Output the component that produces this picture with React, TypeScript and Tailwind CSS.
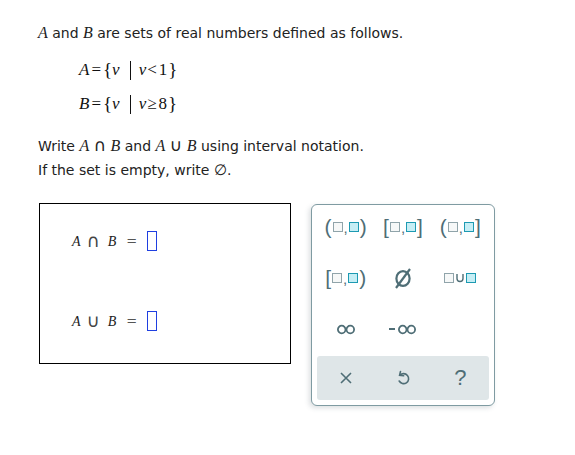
import React from "react";

const sans = "font-['DejaVu_Sans',Verdana,sans-serif]";
const serif = "font-['Liberation_Serif','Times_New_Roman',serif]";

// small square placeholders used in the palette
function Sq({ teal = false }: { teal?: boolean }) {
  return (
    <span
      className={`inline-block h-[10px] w-[10px] border-[1.5px] ${
        teal ? "border-[#1d9ab2] bg-[#c6eef5]" : "border-[#90a4aa] bg-[#f6f8f8]"
      }`}
    />
  );
}

function Interval({ left, right }: { left: string; right: string }) {
  return (
    <span className="flex items-center text-[#4f6e76]">
      <span className="-mt-[2px] font-['Liberation_Sans',sans-serif] text-[21px] leading-none">{left}</span>
      <span className="ml-[1px] flex">
        <Sq />
      </span>
      <span className="mx-[1px] font-['Liberation_Sans',sans-serif] text-[15px] leading-none">,</span>
      <Sq teal />
      <span className="-mt-[2px] ml-[1px] font-['Liberation_Sans',sans-serif] text-[21px] leading-none">{right}</span>
    </span>
  );
}

function Infinity({ className = "" }: { className?: string }) {
  return (
    <svg viewBox="0 0 18 11" className={className} fill="none" stroke="#4f6e76" strokeWidth="1.8">
      <circle cx="4.7" cy="5.5" r="3.8" />
      <circle cx="13.3" cy="5.5" r="3.8" />
    </svg>
  );
}

function Label({ op }: { op: string }) {
  return (
    <div className="flex h-[20px] items-center text-[13px]">
      <span className={`${serif} text-[14px] italic text-[#222]`}>A</span>
      <span className={`${sans} ml-[6px] text-[18px] leading-none text-[#444]`}>{op}</span>
      <span className={`${serif} ml-[8px] text-[14px] italic text-[#222]`}>B</span>
      <span className={`${sans} ml-[10px] text-[#555]`}>=</span>
      <span className="ml-[10px] inline-block h-[20px] w-[10px] border-[1.5px] border-[#1f3fe0]" />
    </div>
  );
}

function SetDef({ name, rel, num }: { name: string; rel: string; num: string }) {
  return (
    <div className="flex items-center">
      <span className="italic">{name}</span>
      <span className="ml-[2px]">=</span>
      <span className="ml-[2px] text-[19px]">{"{"}</span>
      <span className="italic">v</span>
      <span className="ml-[10px] inline-block h-[19px] w-[1px] bg-[#111]" />
      <span className="ml-[8px] italic">v</span>
      <span className="ml-[1px]">{rel}</span>
      <span className="ml-[2px]">{num}</span>
      <span className="ml-[1px] text-[19px]">{"}"}</span>
    </div>
  );
}

export default function App() {
  return (
    <div className={`min-h-[455px] w-[575px] bg-white pl-[38px] pt-[23px] text-[14px] text-[#222] ${sans}`}>
      <p className="leading-[20px]">
        <span className={`${serif} text-[16px] italic`}>A</span> and{" "}
        <span className={`${serif} text-[16px] italic`}>B</span> are sets of real numbers defined as follows.
      </p>

      <div className={`${serif} ml-[41px] mt-[17px] flex flex-col gap-[14px] text-[17px] leading-[20px] text-[#111]`}>
        <SetDef name="A" rel="<" num="1" />
        <SetDef name="B" rel="≥" num="8" />
      </div>

      <p className="mt-[20px] leading-[24px]">
        Write <span className={`${serif} text-[16px] italic`}>A</span>{" "}
        <span className="text-[17px] leading-none">∩</span>{" "}
        <span className={`${serif} text-[16px] italic`}>B</span> and{" "}
        <span className={`${serif} text-[16px] italic`}>A</span>{" "}
        <span className="text-[17px] leading-none">∪</span>{" "}
        <span className={`${serif} text-[16px] italic`}>B</span> using interval notation.
        <br />
        If the set is empty, write <span className="text-[15px]">∅</span>.
      </p>

      <div className="mt-[21px] flex items-start">
        <div className="ml-[1px] flex h-[161px] w-[252px] flex-col gap-[60px] border border-black pl-[32px] pt-[27px]">
          <Label op="∩" />
          <Label op="∪" />
        </div>

        <div className="ml-[20px] mt-[1px] w-[184px] rounded-[6px] border border-[#7f9ba2] bg-white px-[5px] pb-[5px] pt-[2px] shadow-[-2px_2px_5px_rgba(60,80,90,0.18)]">
          <div className="grid grid-cols-3 gap-y-[11px]">
            <div className="flex h-[40px] items-center justify-center">
              <Interval left="(" right=")" />
            </div>
            <div className="flex h-[40px] items-center justify-center">
              <Interval left="[" right="]" />
            </div>
            <div className="flex h-[40px] items-center justify-center">
              <Interval left="(" right="]" />
            </div>

            <div className="flex h-[40px] items-center justify-center">
              <Interval left="[" right=")" />
            </div>
            <div className="flex h-[40px] items-center justify-center">
              <svg viewBox="0 0 18 21" className="h-[21px] w-[18px]" fill="none" stroke="#4f6e76" strokeWidth="2.2">
                <ellipse cx="9" cy="10.5" rx="6.6" ry="7.4" />
                <line x1="16" y1="1" x2="2" y2="20" />
              </svg>
            </div>
            <div className="flex h-[40px] items-center justify-center">
              <span className="flex items-center">
                <Sq />
                <svg viewBox="0 0 10 10" className="mx-[1px] h-[10px] w-[10px]" fill="none" stroke="#4f6e76" strokeWidth="1.4">
                  <path d="M2 1 V5.5 A3 3 0 0 0 8 5.5 V1" />
                </svg>
                <Sq teal />
              </span>
            </div>

            <div className="flex h-[40px] items-center justify-center">
              <Infinity className="h-[11px] w-[18px]" />
            </div>
            <div className="flex h-[40px] items-center justify-center">
              <span className="flex items-center">
                <span className="mr-[3px] inline-block h-[2px] w-[6px] bg-[#4f6e76]" />
                <Infinity className="h-[11px] w-[18px]" />
              </span>
            </div>
            <div className="h-[40px]" />
          </div>

          <div className="mt-[7px] grid h-[44px] grid-cols-3 items-center rounded-[3px] bg-[#dfe6e8]">
            <div className="flex justify-center">
              <svg viewBox="0 0 12 12" className="h-[12px] w-[12px]" fill="none" stroke="#4f6e76" strokeWidth="1.6">
                <path d="M1 1 L11 11 M11 1 L1 11" />
              </svg>
            </div>
            <div className="flex justify-center">
              <svg viewBox="0 0 14 16" className="h-[16px] w-[14px]" fill="none" stroke="#4f6e76" strokeWidth="1.6" strokeLinecap="round">
                <path d="M4 5.2 A5 5 0 1 1 3.2 11" />
                <path d="M4.5 1.5 L3.6 5.4 L7.6 5.8" />
              </svg>
            </div>
            <div className="flex justify-center">
              <span className="font-['Liberation_Sans',sans-serif] text-[22px] leading-none text-[#4f6e76]">?</span>
            </div>
          </div>
        </div>
      </div>
    </div>
  );
}
